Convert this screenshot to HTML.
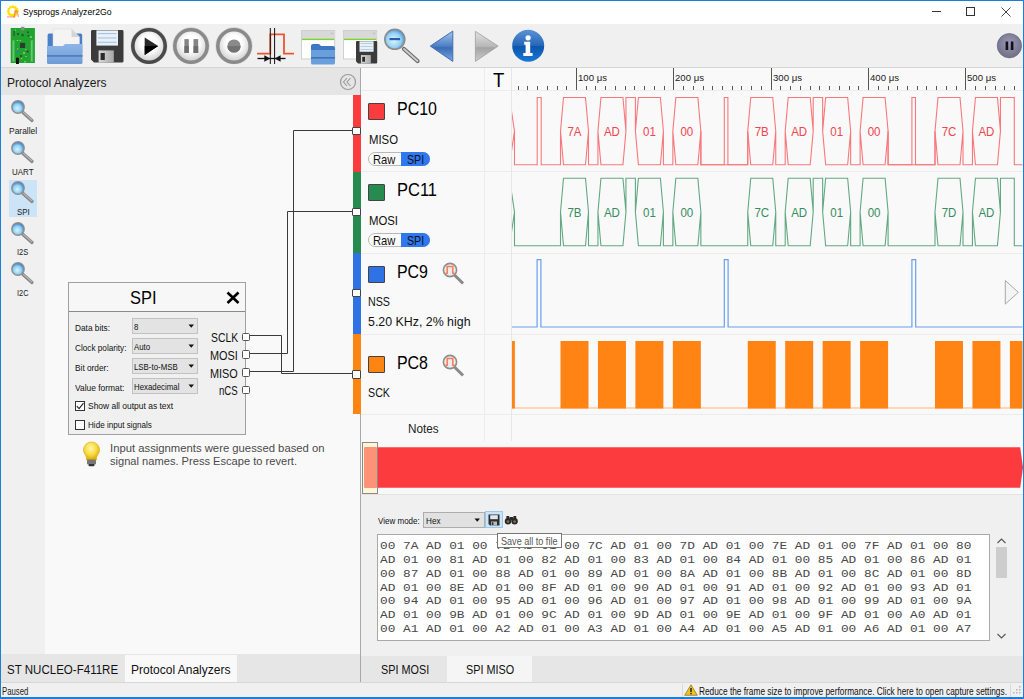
<!DOCTYPE html>
<html><head><meta charset="utf-8">
<style>
*{margin:0;padding:0;box-sizing:border-box}
html,body{width:1024px;height:699px;overflow:hidden;background:#f0f0f0;font-family:"Liberation Sans",sans-serif;color:#000}
.a{position:absolute}
.t{position:absolute;white-space:nowrap;line-height:1}
svg{overflow:visible}
</style></head><body>
<div class="a" style="left:0px;top:0px;width:1024px;height:24px;background:#fff;"></div>
<svg class="a" style="left:0px;top:0px" width="24" height="24" viewBox="0 0 24 24">
<polygon points="19.20,11.40 18.02,12.77 18.36,14.55 16.65,15.15 16.05,16.86 14.27,16.52 12.90,17.70 11.53,16.52 9.75,16.86 9.15,15.15 7.44,14.55 7.78,12.77 6.60,11.40 7.78,10.03 7.44,8.25 9.15,7.65 9.75,5.94 11.53,6.28 12.90,5.10 14.27,6.28 16.05,5.94 16.65,7.65 18.36,8.25 18.02,10.03" fill="#ffe200"/>
<circle cx="12.4" cy="11.1" r="3" fill="#fff"/>
<path d="M7 16.9H14.2L15.3 10.9H16.6L18.6 16.9" fill="none" stroke="#f9a0b4" stroke-width="1.3"/>
<path d="M13.2 16.9L14.2 16.9L15.3 10.9H16.6L17.3 13" fill="none" stroke="#f39a2a" stroke-width="1.3"/>
</svg>
<div class="t" style="left:23.00px;top:8.01px;font-size:9.29px;font-family:'Liberation Sans',sans-serif;font-weight:normal;color:#000;transform:scaleX(0.9391);transform-origin:0 0;">Sysprogs Analyzer2Go</div>
<div class="a" style="left:932px;top:11px;width:9px;height:1px;background:#333;"></div>
<div class="a" style="left:966px;top:7px;width:9px;height:9px;border:1px solid #333"></div>
<svg class="a" style="left:1001px;top:7px" width="10" height="10"><path d="M0.5 0.5l9 9M9.5 0.5l-9 9" stroke="#333" stroke-width="0.9"/></svg>
<div class="a" style="left:1px;top:24px;width:1022px;height:43px;background:#f0f0f0;"></div>
<div class="a" style="left:1px;top:67px;width:1022px;height:1px;background:#d5d5d5;"></div>
<div class="a" style="left:1px;top:68px;width:359px;height:27px;background:#e5e5e5;"></div>
<div class="t" style="left:7.00px;top:75.99px;font-size:13.43px;font-family:'Liberation Sans',sans-serif;font-weight:normal;color:#1a1a1a;transform:scaleX(0.8956);transform-origin:0 0;">Protocol Analyzers</div>
<svg class="a" style="left:339px;top:73px" width="18" height="18"><circle cx="9" cy="9" r="7.5" fill="none" stroke="#9a9a9a" stroke-width="1.2"/>
<path d="M8 5l-3.5 4 3.5 4M11.5 5l-3.5 4 3.5 4" fill="none" stroke="#9a9a9a" stroke-width="1.1"/></svg>
<div class="a" style="left:1px;top:95px;width:44px;height:559px;background:#f0f0f0;"></div>
<div class="a" style="left:45px;top:95px;width:315px;height:559px;background:#f9f9f9;"></div>
<div class="a" style="left:9px;top:180px;width:28px;height:37px;background:#cce4f7;"></div>
<svg class="a" style="left:8.3px;top:97.4px" width="28" height="26" viewBox="0 0 28 26">
<defs><radialGradient id="lg" cx="0.45" cy="0.6" r="0.6"><stop offset="0" stop-color="#d8f4fc"/><stop offset="0.55" stop-color="#8fd0f2"/><stop offset="0.85" stop-color="#4a90d8"/><stop offset="1" stop-color="#2a5fb0"/></radialGradient></defs>
<path d="M15 15.5L24 23.5" stroke="#858585" stroke-width="3.2" stroke-linecap="round"/>
<path d="M15.5 15.5L24 23" stroke="#b5b5b5" stroke-width="1.1" stroke-linecap="round"/>
<circle cx="10" cy="10" r="6.2" fill="url(#lg)" stroke="#8f8f8f" stroke-width="1.4"/>
</svg>
<div class="t" style="left:8.90px;top:126.95px;font-size:9.00px;font-family:'Liberation Sans',sans-serif;font-weight:normal;color:#1a1a1a;transform:scaleX(0.9395);transform-origin:0 0;">Parallel</div>
<svg class="a" style="left:8.3px;top:137.9px" width="28" height="26" viewBox="0 0 28 26">
<defs><radialGradient id="lg" cx="0.45" cy="0.6" r="0.6"><stop offset="0" stop-color="#d8f4fc"/><stop offset="0.55" stop-color="#8fd0f2"/><stop offset="0.85" stop-color="#4a90d8"/><stop offset="1" stop-color="#2a5fb0"/></radialGradient></defs>
<path d="M15 15.5L24 23.5" stroke="#858585" stroke-width="3.2" stroke-linecap="round"/>
<path d="M15.5 15.5L24 23" stroke="#b5b5b5" stroke-width="1.1" stroke-linecap="round"/>
<circle cx="10" cy="10" r="6.2" fill="url(#lg)" stroke="#8f8f8f" stroke-width="1.4"/>
</svg>
<div class="t" style="left:12.25px;top:167.65px;font-size:9.00px;font-family:'Liberation Sans',sans-serif;font-weight:normal;color:#1a1a1a;transform:scaleX(0.8834);transform-origin:0 0;">UART</div>
<svg class="a" style="left:8.3px;top:178.4px" width="28" height="26" viewBox="0 0 28 26">
<defs><radialGradient id="lg" cx="0.45" cy="0.6" r="0.6"><stop offset="0" stop-color="#d8f4fc"/><stop offset="0.55" stop-color="#8fd0f2"/><stop offset="0.85" stop-color="#4a90d8"/><stop offset="1" stop-color="#2a5fb0"/></radialGradient></defs>
<path d="M15 15.5L24 23.5" stroke="#858585" stroke-width="3.2" stroke-linecap="round"/>
<path d="M15.5 15.5L24 23" stroke="#b5b5b5" stroke-width="1.1" stroke-linecap="round"/>
<circle cx="10" cy="10" r="6.2" fill="url(#lg)" stroke="#8f8f8f" stroke-width="1.4"/>
</svg>
<div class="t" style="left:16.65px;top:208.05px;font-size:9.00px;font-family:'Liberation Sans',sans-serif;font-weight:normal;color:#1a1a1a;transform:scaleX(0.8754);transform-origin:0 0;">SPI</div>
<svg class="a" style="left:8.3px;top:218.9px" width="28" height="26" viewBox="0 0 28 26">
<defs><radialGradient id="lg" cx="0.45" cy="0.6" r="0.6"><stop offset="0" stop-color="#d8f4fc"/><stop offset="0.55" stop-color="#8fd0f2"/><stop offset="0.85" stop-color="#4a90d8"/><stop offset="1" stop-color="#2a5fb0"/></radialGradient></defs>
<path d="M15 15.5L24 23.5" stroke="#858585" stroke-width="3.2" stroke-linecap="round"/>
<path d="M15.5 15.5L24 23" stroke="#b5b5b5" stroke-width="1.1" stroke-linecap="round"/>
<circle cx="10" cy="10" r="6.2" fill="url(#lg)" stroke="#8f8f8f" stroke-width="1.4"/>
</svg>
<div class="t" style="left:17.35px;top:248.45px;font-size:9.00px;font-family:'Liberation Sans',sans-serif;font-weight:normal;color:#1a1a1a;transform:scaleX(0.8365);transform-origin:0 0;">I2S</div>
<svg class="a" style="left:8.3px;top:259.4px" width="28" height="26" viewBox="0 0 28 26">
<defs><radialGradient id="lg" cx="0.45" cy="0.6" r="0.6"><stop offset="0" stop-color="#d8f4fc"/><stop offset="0.55" stop-color="#8fd0f2"/><stop offset="0.85" stop-color="#4a90d8"/><stop offset="1" stop-color="#2a5fb0"/></radialGradient></defs>
<path d="M15 15.5L24 23.5" stroke="#858585" stroke-width="3.2" stroke-linecap="round"/>
<path d="M15.5 15.5L24 23" stroke="#b5b5b5" stroke-width="1.1" stroke-linecap="round"/>
<circle cx="10" cy="10" r="6.2" fill="url(#lg)" stroke="#8f8f8f" stroke-width="1.4"/>
</svg>
<div class="t" style="left:17.25px;top:288.95px;font-size:9.00px;font-family:'Liberation Sans',sans-serif;font-weight:normal;color:#1a1a1a;transform:scaleX(0.8211);transform-origin:0 0;">I2C</div>
<div class="a" style="left:360px;top:68px;width:1px;height:614px;background:#a8a8a8;"></div>
<div class="a" style="left:1px;top:654px;width:359px;height:28px;background:#e6e6e6;"></div>
<div class="a" style="left:361px;top:656px;width:662px;height:26px;background:#e6e6e6;"></div>
<div class="a" style="left:125px;top:655px;width:112px;height:27px;background:#f9f9f9;"></div>
<div class="t" style="left:7.20px;top:663.03px;font-size:13.14px;font-family:'Liberation Sans',sans-serif;font-weight:normal;color:#111;transform:scaleX(0.8791);transform-origin:0 0;">ST NUCLEO-F411RE</div>
<div class="t" style="left:130.70px;top:663.03px;font-size:13.14px;font-family:'Liberation Sans',sans-serif;font-weight:normal;color:#111;transform:scaleX(0.9150);transform-origin:0 0;">Protocol Analyzers</div>
<div class="a" style="left:447px;top:656px;width:85px;height:26px;background:#f5f5f5;"></div>
<div class="t" style="left:380.60px;top:664.01px;font-size:12.57px;font-family:'Liberation Sans',sans-serif;font-weight:normal;color:#111;transform:scaleX(0.8625);transform-origin:0 0;">SPI MOSI</div>
<div class="t" style="left:466.30px;top:664.01px;font-size:12.57px;font-family:'Liberation Sans',sans-serif;font-weight:normal;color:#111;transform:scaleX(0.8625);transform-origin:0 0;">SPI MISO</div>
<div class="a" style="left:1px;top:682px;width:1022px;height:1px;background:#d7d7d7;"></div>
<div class="a" style="left:1px;top:683px;width:1022px;height:14px;background:#f0f0f0;"></div>
<div class="t" style="left:2.00px;top:686.27px;font-size:10.86px;font-family:'Liberation Sans',sans-serif;font-weight:normal;color:#222;transform:scaleX(0.7169);transform-origin:0 0;">Paused</div>
<div class="a" style="left:682px;top:684px;width:1px;height:13px;background:#dadada;"></div>
<div class="a" style="left:1010px;top:684px;width:1px;height:13px;background:#dadada;"></div>
<svg class="a" style="left:684px;top:684px" width="14" height="12"><path d="M7 0.8L13.3 11.3H0.7Z" fill="#f3c21f" stroke="#8a7a2a" stroke-width="0.8"/><path d="M7 4v4" stroke="#222" stroke-width="1.5"/><circle cx="7" cy="9.6" r="0.8" fill="#222"/></svg>
<div class="t" style="left:699.10px;top:685.91px;font-size:10.57px;font-family:'Liberation Sans',sans-serif;font-weight:normal;color:#111;transform:scaleX(0.7864);transform-origin:0 0;">Reduce the frame size to improve performance. Click here to open capture settings.</div>
<svg class="a" style="left:1013px;top:686px" width="9" height="9"><g fill="#b5b5b5"><rect x="6" y="0" width="1.5" height="1.5"/><rect x="3" y="3" width="1.5" height="1.5"/><rect x="6" y="3" width="1.5" height="1.5"/><rect x="0" y="6" width="1.5" height="1.5"/><rect x="3" y="6" width="1.5" height="1.5"/><rect x="6" y="6" width="1.5" height="1.5"/></g></svg>
<svg class="a" style="left:0;top:0" width="40" height="70" viewBox="0 0 40 70">
<rect x="10.7" y="28" width="24.2" height="35" fill="#1ea42f"/>
<g fill="#45b855"><rect x="12.2" y="40" width="2.6" height="22"/><rect x="30.6" y="40" width="2.6" height="22"/></g>
<g fill="#8fd08a" opacity="0.7"><rect x="12.8" y="41" width="1" height="20"/><rect x="31.2" y="41" width="1" height="20"/></g>
<rect x="21.1" y="26.8" width="3.2" height="3.6" fill="#8a8a8a"/>
<rect x="20" y="42.9" width="5.1" height="5.1" fill="#2f3a32"/>
<g fill="#3a4a3c"><rect x="17" y="33" width="2" height="2"/><rect x="21.5" y="34" width="2.2" height="2.2"/><rect x="27" y="31.5" width="2" height="1.5"/><rect x="27.5" y="35" width="1.5" height="1.5"/><rect x="26.6" y="50.5" width="2" height="2"/><rect x="20" y="55" width="2" height="2"/><rect x="13.5" y="31" width="1.2" height="5"/></g>
<g fill="#d8c870"><rect x="16.8" y="40" width="1.3" height="0.9"/><rect x="19.5" y="40" width="1.3" height="0.9"/><rect x="17" y="48.5" width="1.2" height="0.9"/><rect x="25.2" y="49" width="1.2" height="0.9"/><rect x="21" y="58" width="1.2" height="0.9"/><rect x="25.5" y="56" width="1.2" height="0.9"/></g>
<g fill="#a8d8a0" opacity="0.6"><rect x="15" y="29.5" width="1" height="1.5"/><rect x="30" y="36" width="2" height="2"/><rect x="23" y="52" width="2" height="2"/><rect x="24" y="61" width="2" height="1.5"/></g>
<rect x="17.4" y="50" width="1.8" height="2.3" fill="#3a70d8"/>
<rect x="16" y="57.7" width="2.9" height="6.3" fill="#111"/>
</svg>
<svg class="a" style="left:46px;top:28px" width="38" height="37" viewBox="0 0 38 37">
<defs><linearGradient id="fb" x1="0" y1="0" x2="0" y2="1"><stop offset="0" stop-color="#8fb6e6"/><stop offset="1" stop-color="#6e9bd6"/></linearGradient></defs>
<rect x="1.6" y="5.5" width="34.6" height="20" rx="1.5" fill="#4a7fc8"/>
<path d="M7 1h18.5l8 8v17H7z" fill="#f4f4f4" stroke="#d8d8d8" stroke-width="0.5"/>
<path d="M25.5 1v8h8z" fill="#d5d5d5"/>
<path d="M1 18h16l2-2h17.5v18.5a1.5 1.5 0 0 1-1.5 1.5H2.5A1.5 1.5 0 0 1 1 34.5z" fill="url(#fb)"/>
<rect x="1" y="27" width="35.5" height="1.8" fill="#4f7fc0"/>
</svg>
<svg class="a" style="left:90.8px;top:29.8px" width="32.5" height="32.6" viewBox="0 0 32.5 32.6" preserveAspectRatio="none">
<path d="M0 1.5A1.5 1.5 0 0 1 1.5 0H31a1.5 1.5 0 0 1 1.5 1.5V31a1.5 1.5 0 0 1-1.5 1.5H3L0 29.5z" fill="#3b3b3b"/>
<rect x="5.4" y="0.4" width="21.6" height="15.2" fill="#e8f0f8"/>
<g fill="#9bb8d8"><rect x="7" y="3.2" width="18.5" height="0.9"/><rect x="7" y="7.5" width="18.5" height="0.9"/><rect x="7" y="11.8" width="18.5" height="0.9"/></g>
<defs><linearGradient id="sh90" x1="0" y1="0" x2="1" y2="0"><stop offset="0" stop-color="#d8d8d8"/><stop offset="1" stop-color="#a9a9a9"/></linearGradient></defs>
<rect x="7.6" y="20.4" width="15.2" height="12.2" fill="url(#sh90)"/>
<rect x="9.6" y="23" width="4.2" height="7" fill="#2a2a2a"/>
</svg>
<svg class="a" style="left:130.3px;top:26.9px" width="38" height="38" viewBox="0 0 38 38">
<defs><radialGradient id="cgplay" cx="0.5" cy="0.42" r="0.55"><stop offset="0.45" stop-color="#ffffff"/><stop offset="1" stop-color="#cfcfcf"/></radialGradient>
<linearGradient id="crplay" x1="0" y1="0" x2="0" y2="1"><stop offset="0" stop-color="#c8c8c8"/><stop offset="1" stop-color="#e6e6e6"/></linearGradient></defs>
<circle cx="19" cy="19" r="18.3" fill="none" stroke="url(#crplay)" stroke-width="0.8"/>
<circle cx="19" cy="19" r="16.2" fill="url(#cgplay)" stroke="#4a4a4a" stroke-width="3.6"/><path d="M14.7 10.4L28.2 19 14.7 27.9z" fill="#2a2a2a"/><path d="M14.7 19h13.5l-13.5 8.9z" fill="#000"/></svg>
<svg class="a" style="left:172.3px;top:26.9px" width="38" height="38" viewBox="0 0 38 38">
<defs><radialGradient id="cgpause" cx="0.5" cy="0.42" r="0.55"><stop offset="0.45" stop-color="#ffffff"/><stop offset="1" stop-color="#cfcfcf"/></radialGradient>
<linearGradient id="crpause" x1="0" y1="0" x2="0" y2="1"><stop offset="0" stop-color="#c8c8c8"/><stop offset="1" stop-color="#e6e6e6"/></linearGradient></defs>
<circle cx="19" cy="19" r="18.3" fill="none" stroke="url(#crpause)" stroke-width="0.8"/>
<circle cx="19" cy="19" r="16.2" fill="url(#cgpause)" stroke="#8a8a8a" stroke-width="3.6"/><rect x="12.4" y="12.1" width="4.4" height="13.9" fill="#858585"/><rect x="21.5" y="12.1" width="4.7" height="13.9" fill="#858585"/><rect x="12.4" y="19" width="4.4" height="7" fill="#6e6e6e"/><rect x="21.5" y="19" width="4.7" height="7" fill="#6e6e6e"/></svg>
<svg class="a" style="left:214.5px;top:26.9px" width="38" height="38" viewBox="0 0 38 38">
<defs><radialGradient id="cgrec" cx="0.5" cy="0.42" r="0.55"><stop offset="0.45" stop-color="#ffffff"/><stop offset="1" stop-color="#cfcfcf"/></radialGradient>
<linearGradient id="crrec" x1="0" y1="0" x2="0" y2="1"><stop offset="0" stop-color="#c8c8c8"/><stop offset="1" stop-color="#e6e6e6"/></linearGradient></defs>
<circle cx="19" cy="19" r="18.3" fill="none" stroke="url(#crrec)" stroke-width="0.8"/>
<circle cx="19" cy="19" r="16.2" fill="url(#cgrec)" stroke="#8a8a8a" stroke-width="3.6"/><circle cx="19" cy="19" r="6.6" fill="#8a8a8a"/><path d="M12.4 19a6.6 6.6 0 0 0 13.2 0z" fill="#727272"/></svg>
<svg class="a" style="left:256px;top:27px" width="40" height="38" viewBox="0 0 40 38">
<path d="M1 26.6h13.3V7.3h13.7v19.3h10" fill="none" stroke="#e8572e" stroke-width="1.8"/>
<path d="M14.3 1v36M18.6 1v36" stroke="#111" stroke-width="1"/>
<path d="M1.5 31.5h28" stroke="#111" stroke-width="1.3"/>
<path d="M14.3 31.5l-6-3.3v6.6z M18.6 31.5l6-3.3v6.6z" fill="#111"/>
</svg>
<svg class="a" style="left:300.6px;top:29.5px" width="36" height="35" viewBox="0 0 36 35">
<rect x="0.5" y="0.5" width="33.2" height="28.5" fill="#fff" stroke="#cfcfcf" stroke-width="1"/>
<rect x="1" y="1" width="32.2" height="7.5" fill="#d9d9d9"/>
<rect x="1" y="8.5" width="32.2" height="1.6" fill="#7fd03a"/>
<path d="M30 2.5l2 2M32 2.5l-2 2" stroke="#aaa" stroke-width="0.6"/></svg>
<svg class="a" style="left:342.7px;top:29.5px" width="36" height="35" viewBox="0 0 36 35">
<rect x="0.5" y="0.5" width="33.2" height="28.5" fill="#fff" stroke="#cfcfcf" stroke-width="1"/>
<rect x="1" y="1" width="32.2" height="7.5" fill="#d9d9d9"/>
<rect x="1" y="8.5" width="32.2" height="1.6" fill="#7fd03a"/>
<path d="M30 2.5l2 2M32 2.5l-2 2" stroke="#aaa" stroke-width="0.6"/></svg>
<svg class="a" style="left:310px;top:42.5px" width="26" height="22" viewBox="0 0 26 22">
<path d="M1 3a2 2 0 0 1 2-2h6l2 2h12a2 2 0 0 1 2 2v3H1z" fill="#3d78c4"/>
<path d="M1 7h24v13a1.5 1.5 0 0 1-1.5 1.5h-21A1.5 1.5 0 0 1 1 20z" fill="#6b9fdc"/>
<rect x="1" y="14" width="24" height="1.6" fill="#3f72b8"/>
</svg>
<svg class="a" style="left:356.3px;top:41.0px" width="21.2" height="22.5" viewBox="0 0 32.5 32.6" preserveAspectRatio="none">
<path d="M0 1.5A1.5 1.5 0 0 1 1.5 0H31a1.5 1.5 0 0 1 1.5 1.5V31a1.5 1.5 0 0 1-1.5 1.5H3L0 29.5z" fill="#3b3b3b"/>
<rect x="5.4" y="0.4" width="21.6" height="15.2" fill="#e8f0f8"/>
<g fill="#9bb8d8"><rect x="7" y="3.2" width="18.5" height="0.9"/><rect x="7" y="7.5" width="18.5" height="0.9"/><rect x="7" y="11.8" width="18.5" height="0.9"/></g>
<defs><linearGradient id="sh356" x1="0" y1="0" x2="1" y2="0"><stop offset="0" stop-color="#d8d8d8"/><stop offset="1" stop-color="#a9a9a9"/></linearGradient></defs>
<rect x="7.6" y="20.4" width="15.2" height="12.2" fill="url(#sh356)"/>
<rect x="9.6" y="23" width="4.2" height="7" fill="#2a2a2a"/>
</svg>
<svg class="a" style="left:383px;top:27px" width="38" height="37" viewBox="0 0 38 37">
<defs><radialGradient id="zg" cx="0.45" cy="0.55" r="0.6"><stop offset="0" stop-color="#dff6fd"/><stop offset="0.6" stop-color="#95d2f3"/><stop offset="1" stop-color="#3a86d2"/></radialGradient></defs>
<path d="M21 22L34.5 34" stroke="#6a6a6a" stroke-width="4.2" stroke-linecap="round"/>
<path d="M21 22L34.5 34" stroke="#cfcfcf" stroke-width="1.8" stroke-linecap="round"/>
<circle cx="11.8" cy="12.3" r="10" fill="url(#zg)" stroke="#8c8c8c" stroke-width="1.6"/>
<rect x="6.5" y="11" width="10.6" height="2.2" fill="#2a5fa8"/>
</svg>
<svg class="a" style="left:429px;top:29.5px" width="26" height="33" viewBox="0 0 26 33">
<defs><linearGradient id="lt" x1="0" y1="0" x2="0" y2="1"><stop offset="0" stop-color="#a6c6ea"/><stop offset="0.5" stop-color="#4e7ec4"/><stop offset="0.55" stop-color="#3a6cb6"/><stop offset="1" stop-color="#7ea6e2"/></linearGradient></defs>
<path d="M1.3 16.1L23.8 1.1V31.4z" fill="url(#lt)" stroke="#3f6fb4" stroke-width="1"/>
</svg>
<svg class="a" style="left:474px;top:29.5px" width="26" height="33" viewBox="0 0 26 33">
<defs><linearGradient id="rt" x1="0" y1="0" x2="0" y2="1"><stop offset="0" stop-color="#e2e2e2"/><stop offset="0.5" stop-color="#b8b8b8"/><stop offset="0.55" stop-color="#a3a3a3"/><stop offset="1" stop-color="#cdcdcd"/></linearGradient></defs>
<path d="M1.4 1.3V31.4L24.2 16.1z" fill="url(#rt)" stroke="#a0a0a0" stroke-width="0.8"/>
</svg>
<svg class="a" style="left:511px;top:29px" width="34" height="34" viewBox="0 0 34 34">
<defs><linearGradient id="ig" x1="0" y1="0" x2="0" y2="1"><stop offset="0" stop-color="#5b93d6"/><stop offset="0.5" stop-color="#2466b8"/><stop offset="0.52" stop-color="#0c56ad"/><stop offset="1" stop-color="#1a78d6"/></linearGradient></defs>
<circle cx="17.2" cy="16.8" r="16" fill="url(#ig)"/>
<circle cx="17.1" cy="8.8" r="2.6" fill="#fff"/>
<path d="M13.2 12.8h6v11.2h2.4v3.1H12.3V24h2.3v-8.2h-1.4z" fill="#fff"/>
</svg>
<svg class="a" style="left:996px;top:33px" width="26" height="26" viewBox="0 0 26 26">
<defs><radialGradient id="pr" cx="0.5" cy="0.4" r="0.6"><stop offset="0" stop-color="#9a9ab8"/><stop offset="1" stop-color="#6f6f88"/></radialGradient></defs>
<circle cx="13.4" cy="12.7" r="12.2" fill="url(#pr)" stroke="#5f5f70" stroke-width="0.6"/>
<rect x="9.6" y="8.5" width="2.6" height="8.5" fill="#111"/><rect x="14.8" y="8.5" width="2.6" height="8.5" fill="#111"/>
</svg>
<div class="a" style="left:68px;top:282px;width:178px;height:153px;background:#f0f0f0;border:1px solid #a0a0a0"></div>
<div class="a" style="left:69px;top:283px;width:176px;height:28px;background:#f7f7f7;"></div>
<div class="a" style="left:69px;top:311px;width:176px;height:1px;background:#8a8a8a;"></div>
<div class="t" style="left:130.05px;top:290.46px;font-size:17.57px;font-family:'Liberation Sans',sans-serif;font-weight:normal;color:#000;transform:scaleX(0.9356);transform-origin:0 0;">SPI</div>
<svg class="a" style="left:226px;top:291px" width="15" height="14"><path d="M1.5 1.5l11 10.5M12.5 1.5l-11 10.5" stroke="#000" stroke-width="2.6"/></svg>
<div class="t" style="left:74.90px;top:323.19px;font-size:9.43px;font-family:'Liberation Sans',sans-serif;font-weight:normal;color:#111;transform:scaleX(0.8813);transform-origin:0 0;">Data bits:</div>
<div class="a" style="left:131.5px;top:318px;width:66px;height:16px;background:#e3e3e3;border:1px solid #c2c2c2"></div>
<div class="t" style="left:134.10px;top:322.95px;font-size:9.00px;font-family:'Liberation Sans',sans-serif;font-weight:normal;color:#111;transform:scaleX(0.8727);transform-origin:0 0;">8</div>
<svg class="a" style="left:187.5px;top:324.0px" width="7" height="5"><path d="M0.5 0.5h5.5l-2.75 3.3z" fill="#111"/></svg>
<div class="t" style="left:74.90px;top:343.09px;font-size:9.43px;font-family:'Liberation Sans',sans-serif;font-weight:normal;color:#111;transform:scaleX(0.8698);transform-origin:0 0;">Clock polarity:</div>
<div class="a" style="left:131.5px;top:338px;width:66px;height:16px;background:#e3e3e3;border:1px solid #c2c2c2"></div>
<div class="t" style="left:134.10px;top:342.95px;font-size:9.00px;font-family:'Liberation Sans',sans-serif;font-weight:normal;color:#111;transform:scaleX(0.8727);transform-origin:0 0;">Auto</div>
<svg class="a" style="left:187.5px;top:344.0px" width="7" height="5"><path d="M0.5 0.5h5.5l-2.75 3.3z" fill="#111"/></svg>
<div class="t" style="left:74.90px;top:363.09px;font-size:9.43px;font-family:'Liberation Sans',sans-serif;font-weight:normal;color:#111;transform:scaleX(0.8809);transform-origin:0 0;">Bit order:</div>
<div class="a" style="left:131.5px;top:358px;width:66px;height:16px;background:#e3e3e3;border:1px solid #c2c2c2"></div>
<div class="t" style="left:134.10px;top:362.95px;font-size:9.00px;font-family:'Liberation Sans',sans-serif;font-weight:normal;color:#111;transform:scaleX(0.8727);transform-origin:0 0;">LSB-to-MSB</div>
<svg class="a" style="left:187.5px;top:364.0px" width="7" height="5"><path d="M0.5 0.5h5.5l-2.75 3.3z" fill="#111"/></svg>
<div class="t" style="left:74.90px;top:382.99px;font-size:9.43px;font-family:'Liberation Sans',sans-serif;font-weight:normal;color:#111;transform:scaleX(0.8921);transform-origin:0 0;">Value format:</div>
<div class="a" style="left:131.5px;top:378px;width:66px;height:16px;background:#e3e3e3;border:1px solid #c2c2c2"></div>
<div class="t" style="left:134.10px;top:382.95px;font-size:9.00px;font-family:'Liberation Sans',sans-serif;font-weight:normal;color:#111;transform:scaleX(0.8727);transform-origin:0 0;">Hexadecimal</div>
<svg class="a" style="left:187.5px;top:384.0px" width="7" height="5"><path d="M0.5 0.5h5.5l-2.75 3.3z" fill="#111"/></svg>
<div class="a" style="left:75px;top:401px;width:10px;height:10px;background:#fff;border:1px solid #333"></div>
<svg class="a" style="left:75px;top:401px" width="10" height="10"><path d="M1.8 5.2l2.3 2.4 4.4-5.4" fill="none" stroke="#222" stroke-width="1.1"/></svg>
<div class="t" style="left:88.20px;top:400.54px;font-size:9.71px;font-family:'Liberation Sans',sans-serif;font-weight:normal;color:#111;transform:scaleX(0.8717);transform-origin:0 0;">Show all output as text</div>
<div class="a" style="left:75px;top:420px;width:10px;height:10px;background:#fff;border:1px solid #333"></div>
<div class="t" style="left:88.20px;top:420.44px;font-size:9.71px;font-family:'Liberation Sans',sans-serif;font-weight:normal;color:#111;transform:scaleX(0.8333);transform-origin:0 0;">Hide input signals</div>
<div class="t" style="left:210.70px;top:332.29px;font-size:12.71px;font-family:'Liberation Sans',sans-serif;font-weight:normal;color:#111;transform:scaleX(0.8159);transform-origin:0 0;">SCLK</div>
<div class="a" style="left:241.5px;top:332.59999999999997px;width:8.6px;height:8.6px;background:#fff;border:1px solid #555;border-radius:1.5px"></div>
<div class="t" style="left:210.00px;top:349.89px;font-size:12.71px;font-family:'Liberation Sans',sans-serif;font-weight:normal;color:#111;transform:scaleX(0.8555);transform-origin:0 0;">MOSI</div>
<div class="a" style="left:241.5px;top:350.2px;width:8.6px;height:8.6px;background:#fff;border:1px solid #555;border-radius:1.5px"></div>
<div class="t" style="left:210.00px;top:367.69px;font-size:12.71px;font-family:'Liberation Sans',sans-serif;font-weight:normal;color:#111;transform:scaleX(0.8555);transform-origin:0 0;">MISO</div>
<div class="a" style="left:241.5px;top:368.0px;width:8.6px;height:8.6px;background:#fff;border:1px solid #555;border-radius:1.5px"></div>
<div class="t" style="left:219.00px;top:385.19px;font-size:12.71px;font-family:'Liberation Sans',sans-serif;font-weight:normal;color:#111;transform:scaleX(0.7601);transform-origin:0 0;">nCS</div>
<div class="a" style="left:241.5px;top:385.5px;width:8.6px;height:8.6px;background:#fff;border:1px solid #555;border-radius:1.5px"></div>
<svg class="a" style="left:82px;top:441px" width="19" height="26" viewBox="0 0 19 26">
<defs><radialGradient id="bl" cx="0.45" cy="0.35" r="0.6"><stop offset="0" stop-color="#fff6b0"/><stop offset="0.6" stop-color="#f8dc40"/><stop offset="1" stop-color="#e0b010"/></radialGradient></defs>
<path d="M9.5 1A8 8 0 0 1 17.5 9c0 3.2-2.4 5-3 7.5v2.5h-10v-2.5C3.9 14 1.5 12.2 1.5 9A8 8 0 0 1 9.5 1z" fill="url(#bl)" stroke="#d6a814" stroke-width="0.6"/>
<rect x="5" y="18.5" width="9" height="5" rx="1" fill="#777"/><rect x="6.5" y="23" width="6" height="2.3" rx="1" fill="#333"/>
</svg>
<div class="t" style="left:109.80px;top:443.37px;font-size:10.86px;font-family:'Liberation Sans',sans-serif;font-weight:normal;color:#4a4a4a;transform:scaleX(1.0391);transform-origin:0 0;">Input assignments were guessed based on</div>
<div class="t" style="left:109.80px;top:456.37px;font-size:10.86px;font-family:'Liberation Sans',sans-serif;font-weight:normal;color:#4a4a4a;transform:scaleX(1.0227);transform-origin:0 0;">signal names. Press Escape to revert.</div>
<div class="a" style="left:361px;top:68px;width:662px;height:373px;background:#f9f9f9;"></div>
<div class="a" style="left:361px;top:90px;width:662px;height:1px;background:#ececec;"></div>
<div class="a" style="left:361px;top:171px;width:662px;height:1px;background:#ececec;"></div>
<div class="a" style="left:361px;top:253px;width:662px;height:1px;background:#ececec;"></div>
<div class="a" style="left:361px;top:334px;width:662px;height:1px;background:#ececec;"></div>
<div class="a" style="left:361px;top:414px;width:662px;height:1px;background:#ececec;"></div>
<div class="a" style="left:361px;top:441px;width:662px;height:1px;background:#ececec;"></div>
<div class="a" style="left:484px;top:68px;width:1px;height:373px;background:#ececec;"></div>
<div class="a" style="left:511px;top:68px;width:1px;height:373px;background:#e6e6e6;"></div>
<div class="a" style="left:353px;top:95px;width:8px;height:77px;background:#fc3b3d;"></div>
<div class="a" style="left:353px;top:172px;width:8px;height:81px;background:#278a4f;"></div>
<div class="a" style="left:353px;top:253px;width:8px;height:81px;background:#2f72e6;"></div>
<div class="a" style="left:353px;top:334px;width:8px;height:80px;background:#ff8512;"></div>
<div class="a" style="left:368px;top:103px;width:17px;height:17px;background:#fc3b3d;border:1px solid #444;border-radius:1px"></div>
<div class="t" style="left:397.00px;top:100.11px;font-size:18.57px;font-family:'Liberation Sans',sans-serif;font-weight:normal;color:#000;transform:scaleX(0.8610);transform-origin:0 0;">PC10</div>
<div class="a" style="left:368px;top:184px;width:17px;height:17px;background:#278a4f;border:1px solid #444;border-radius:1px"></div>
<div class="t" style="left:397.00px;top:181.11px;font-size:18.57px;font-family:'Liberation Sans',sans-serif;font-weight:normal;color:#000;transform:scaleX(0.8873);transform-origin:0 0;">PC11</div>
<div class="a" style="left:368px;top:265.5px;width:17px;height:17px;background:#2f72e6;border:1px solid #444;border-radius:1px"></div>
<div class="t" style="left:397.00px;top:263.11px;font-size:18.57px;font-family:'Liberation Sans',sans-serif;font-weight:normal;color:#000;transform:scaleX(0.8580);transform-origin:0 0;">PC9</div>
<div class="a" style="left:368px;top:356px;width:17px;height:17px;background:#ff8512;border:1px solid #444;border-radius:1px"></div>
<div class="t" style="left:397.00px;top:354.11px;font-size:18.57px;font-family:'Liberation Sans',sans-serif;font-weight:normal;color:#000;transform:scaleX(0.8580);transform-origin:0 0;">PC8</div>
<div class="t" style="left:368.50px;top:133.97px;font-size:12.86px;font-family:'Liberation Sans',sans-serif;font-weight:normal;color:#111;transform:scaleX(0.8826);transform-origin:0 0;">MISO</div>
<div class="a" style="left:368px;top:151.5px;width:62px;height:14px;background:#fbfbfb;border:1px solid #b8b8b8;border-radius:7px"></div>
<div class="a" style="left:401px;top:151.5px;width:29px;height:14px;background:#3078f0;border-radius:0 7px 7px 0"></div>
<div class="t" style="left:372.80px;top:154.26px;font-size:12.29px;font-family:'Liberation Sans',sans-serif;font-weight:normal;color:#111;transform:scaleX(0.9114);transform-origin:0 0;">Raw</div>
<div class="t" style="left:406.50px;top:154.26px;font-size:12.29px;font-family:'Liberation Sans',sans-serif;font-weight:normal;color:#111;transform:scaleX(0.8686);transform-origin:0 0;">SPI</div>
<div class="t" style="left:368.50px;top:215.27px;font-size:12.86px;font-family:'Liberation Sans',sans-serif;font-weight:normal;color:#111;transform:scaleX(0.8826);transform-origin:0 0;">MOSI</div>
<div class="a" style="left:368px;top:232.5px;width:62px;height:14px;background:#fbfbfb;border:1px solid #b8b8b8;border-radius:7px"></div>
<div class="a" style="left:401px;top:232.5px;width:29px;height:14px;background:#3078f0;border-radius:0 7px 7px 0"></div>
<div class="t" style="left:372.80px;top:235.26px;font-size:12.29px;font-family:'Liberation Sans',sans-serif;font-weight:normal;color:#111;transform:scaleX(0.9114);transform-origin:0 0;">Raw</div>
<div class="t" style="left:406.50px;top:235.26px;font-size:12.29px;font-family:'Liberation Sans',sans-serif;font-weight:normal;color:#111;transform:scaleX(0.8686);transform-origin:0 0;">SPI</div>
<div class="t" style="left:368.00px;top:296.37px;font-size:12.86px;font-family:'Liberation Sans',sans-serif;font-weight:normal;color:#111;transform:scaleX(0.8322);transform-origin:0 0;">NSS</div>
<div class="t" style="left:368.00px;top:315.97px;font-size:12.86px;font-family:'Liberation Sans',sans-serif;font-weight:normal;color:#111;transform:scaleX(0.9625);transform-origin:0 0;">5.20 KHz, 2% high</div>
<div class="t" style="left:368.00px;top:387.47px;font-size:12.86px;font-family:'Liberation Sans',sans-serif;font-weight:normal;color:#111;transform:scaleX(0.8322);transform-origin:0 0;">SCK</div>
<svg class="a" style="left:441.4px;top:261.4px" width="24" height="24" viewBox="0 0 24 24">
<path d="M14 14.5l7 7" stroke="#8a8a8a" stroke-width="3" stroke-linecap="square"/>
<circle cx="9" cy="9" r="6.6" fill="#ececec" stroke="#8e8e8e" stroke-width="1.6"/>
<path d="M4.5 12.2h1.7V5.6h5.6v6.6h1.7" fill="none" stroke="#ff7a50" stroke-width="1.5"/>
</svg>
<svg class="a" style="left:441.4px;top:352.5px" width="24" height="24" viewBox="0 0 24 24">
<path d="M14 14.5l7 7" stroke="#8a8a8a" stroke-width="3" stroke-linecap="square"/>
<circle cx="9" cy="9" r="6.6" fill="#ececec" stroke="#8e8e8e" stroke-width="1.6"/>
<path d="M4.5 12.2h1.7V5.6h5.6v6.6h1.7" fill="none" stroke="#ff7a50" stroke-width="1.5"/>
</svg>
<div class="t" style="left:407.65px;top:422.36px;font-size:13.57px;font-family:'Liberation Sans',sans-serif;font-weight:normal;color:#222;transform:scaleX(0.8659);transform-origin:0 0;">Notes</div>
<div class="t" style="left:492.65px;top:70.72px;font-size:19.86px;font-family:'Liberation Sans',sans-serif;font-weight:normal;color:#000;transform:scaleX(0.9316);transform-origin:0 0;">T</div>
<div class="a" style="left:361px;top:441px;width:662px;height:53px;background:#f8f8f8;"></div>
<div class="a" style="left:361px;top:494px;width:662px;height:1px;background:#e2e2e2;"></div>
<svg class="a" style="left:0;top:0" width="1024" height="699"><path d="M377.5 447.3H1020.2L1023 467.6L1020.2 487.8H377.5Z" fill="#fc3b3f"/></svg>
<div class="a" style="left:362px;top:442px;width:16px;height:52px;background:#fff5d8;border:1px solid #8a8a8a"></div>
<div class="a" style="left:363.5px;top:447px;width:13px;height:41px;background:#fd9277;border-radius:1px"></div>
<div class="a" style="left:361px;top:495px;width:662px;height:161px;background:#f0f0f0;"></div>
<div class="t" style="left:378.40px;top:517.01px;font-size:9.29px;font-family:'Liberation Sans',sans-serif;font-weight:normal;color:#111;transform:scaleX(0.8646);transform-origin:0 0;">View mode:</div>
<div class="a" style="left:423px;top:512px;width:62px;height:16px;background:#e1e1e1;border:1px solid #adadad"></div>
<div class="t" style="left:425.80px;top:516.09px;font-size:9.43px;font-family:'Liberation Sans',sans-serif;font-weight:normal;color:#111;transform:scaleX(0.8648);transform-origin:0 0;">Hex</div>
<svg class="a" style="left:474px;top:518px" width="7" height="5"><path d="M0.5 0.5h5.5l-2.75 3.3z" fill="#111"/></svg>
<div class="a" style="left:485px;top:511px;width:18px;height:17px;background:#cce4f7;border:1px solid #99c9ef"></div>
<svg class="a" style="left:488px;top:514px" width="12" height="12" viewBox="0 0 12 12"><path d="M0.5 0.5h11v11H2L0.5 10z" fill="#2e2e2e"/><rect x="2.2" y="1.2" width="7.6" height="4" fill="#dfe8f2"/><rect x="3" y="7.5" width="6" height="4" fill="#bbb"/><rect x="3.8" y="8.2" width="1.6" height="2.8" fill="#333"/></svg>
<svg class="a" style="left:504px;top:514px" width="15" height="11" viewBox="0 0 15 11"><g fill="#2a2a2a"><circle cx="4" cy="7.2" r="3.2"/><circle cx="10.6" cy="7.2" r="3.2"/><rect x="5.5" y="3" width="3.6" height="3.5"/><rect x="2.4" y="2" width="2.8" height="3.5"/><rect x="9.4" y="2" width="2.8" height="3.5"/></g><circle cx="4" cy="7.6" r="1.3" fill="#8a6a4a"/><circle cx="10.6" cy="7.6" r="1.3" fill="#8a6a4a"/></svg>
<div class="a" style="left:377px;top:534px;width:613px;height:107px;background:#fff;border:1px solid #a9a9a9"></div>
<div class="t" style="left:380.30px;top:539.98px;font-size:11.60px;font-family:'Liberation Mono',monospace;font-weight:normal;color:#484848;transform:scaleX(1.1041);transform-origin:0 0;">00 7A AD 01 00 7B AD 01 00 7C AD 01 00 7D AD 01 00 7E AD 01 00 7F AD 01 00 80</div>
<div class="t" style="left:380.30px;top:553.83px;font-size:11.60px;font-family:'Liberation Mono',monospace;font-weight:normal;color:#484848;transform:scaleX(1.1041);transform-origin:0 0;">AD 01 00 81 AD 01 00 82 AD 01 00 83 AD 01 00 84 AD 01 00 85 AD 01 00 86 AD 01</div>
<div class="t" style="left:380.30px;top:567.68px;font-size:11.60px;font-family:'Liberation Mono',monospace;font-weight:normal;color:#484848;transform:scaleX(1.1041);transform-origin:0 0;">00 87 AD 01 00 88 AD 01 00 89 AD 01 00 8A AD 01 00 8B AD 01 00 8C AD 01 00 8D</div>
<div class="t" style="left:380.30px;top:581.53px;font-size:11.60px;font-family:'Liberation Mono',monospace;font-weight:normal;color:#484848;transform:scaleX(1.1041);transform-origin:0 0;">AD 01 00 8E AD 01 00 8F AD 01 00 90 AD 01 00 91 AD 01 00 92 AD 01 00 93 AD 01</div>
<div class="t" style="left:380.30px;top:595.38px;font-size:11.60px;font-family:'Liberation Mono',monospace;font-weight:normal;color:#484848;transform:scaleX(1.1041);transform-origin:0 0;">00 94 AD 01 00 95 AD 01 00 96 AD 01 00 97 AD 01 00 98 AD 01 00 99 AD 01 00 9A</div>
<div class="t" style="left:380.30px;top:609.23px;font-size:11.60px;font-family:'Liberation Mono',monospace;font-weight:normal;color:#484848;transform:scaleX(1.1041);transform-origin:0 0;">AD 01 00 9B AD 01 00 9C AD 01 00 9D AD 01 00 9E AD 01 00 9F AD 01 00 A0 AD 01</div>
<div class="t" style="left:380.30px;top:623.08px;font-size:11.60px;font-family:'Liberation Mono',monospace;font-weight:normal;color:#484848;transform:scaleX(1.1041);transform-origin:0 0;">00 A1 AD 01 00 A2 AD 01 00 A3 AD 01 00 A4 AD 01 00 A5 AD 01 00 A6 AD 01 00 A7</div>
<svg class="a" style="left:996px;top:537px" width="11" height="8"><path d="M1.5 6L5.5 2l4 4" fill="none" stroke="#555" stroke-width="1.1"/></svg>
<div class="a" style="left:996px;top:547px;width:11px;height:31px;background:#cdcdcd;"></div>
<svg class="a" style="left:996px;top:632px" width="11" height="8"><path d="M1.5 2l4 4 4-4" fill="none" stroke="#555" stroke-width="1.1"/></svg>
<div class="a" style="left:497px;top:533px;width:65px;height:15px;background:#fff;border:1px solid #767676"></div>
<div class="t" style="left:500.80px;top:535.71px;font-size:10.57px;font-family:'Liberation Sans',sans-serif;font-weight:normal;color:#555;transform:scaleX(0.8585);transform-origin:0 0;">Save all to file</div>
<svg class="a" style="left:0;top:0" width="1024" height="699" viewBox="0 0 1024 699">
<clipPath id="wc"><rect x="512" y="90" width="510.5" height="324"/></clipPath><g clip-path="url(#wc)"><path d="M560.50 131.15L563.50 97.5H585.50L588.50 131.15L585.50 164.8H563.50Z M597.95 131.15L600.95 97.5H622.95L625.95 131.15L622.95 164.8H600.95Z M635.40 131.15L638.40 97.5H660.40L663.40 131.15L660.40 164.8H638.40Z M672.85 131.15L675.85 97.5H697.85L700.85 131.15L697.85 164.8H675.85Z M747.75 131.15L750.75 97.5H772.75L775.75 131.15L772.75 164.8H750.75Z M785.20 131.15L788.20 97.5H810.20L813.20 131.15L810.20 164.8H788.20Z M822.65 131.15L825.65 97.5H847.65L850.65 131.15L847.65 164.8H825.65Z M860.10 131.15L863.10 97.5H885.10L888.10 131.15L885.10 164.8H863.10Z M935.00 131.15L938.00 97.5H960.00L963.00 131.15L960.00 164.8H938.00Z M972.45 131.15L975.45 97.5H997.45L1000.45 131.15L997.45 164.8H975.45Z M588.50 131.15V164.8H597.95V131.15 M625.95 131.15V97.5H635.40V131.15 M663.40 131.15V164.8H672.85V131.15 M700.85 131.15V164.8H747.75V131.15 M775.75 131.15V164.8H785.20V131.15 M813.20 131.15V97.5H822.65V131.15 M850.65 131.15V164.8H860.10V131.15 M888.10 131.15V164.8H935.00V131.15 M963.00 131.15V164.8H972.45V131.15 M509 94.5L514.5 131.15L509 167.8 M514.5 131.15V164.8H537.2V97.5H541.2V164.8H560.50V131.15 M1000.45 131.15V97.5H1014.3V164.8H1030" fill="none" stroke="#f7787c" stroke-width="1.1"/>
<path d="M700.85 131.15V164.8H724.30V97.5H727.90V164.8H747.75V131.15" fill="none" stroke="#f7787c" stroke-width="1.1"/>
<path d="M888.10 131.15V164.8H911.90V97.5H915.50V164.8H935.00V131.15" fill="none" stroke="#f7787c" stroke-width="1.1"/>
<text x="574.50" y="136.45" text-anchor="middle" font-family="Liberation Sans" font-size="12.6" fill="#f0444e" textLength="14.09" lengthAdjust="spacingAndGlyphs">7A</text><text x="611.95" y="136.45" text-anchor="middle" font-family="Liberation Sans" font-size="12.6" fill="#f0444e" textLength="16.00" lengthAdjust="spacingAndGlyphs">AD</text><text x="649.40" y="136.45" text-anchor="middle" font-family="Liberation Sans" font-size="12.6" fill="#f0444e" textLength="12.81" lengthAdjust="spacingAndGlyphs">01</text><text x="686.85" y="136.45" text-anchor="middle" font-family="Liberation Sans" font-size="12.6" fill="#f0444e" textLength="12.81" lengthAdjust="spacingAndGlyphs">00</text><text x="761.75" y="136.45" text-anchor="middle" font-family="Liberation Sans" font-size="12.6" fill="#f0444e" textLength="14.09" lengthAdjust="spacingAndGlyphs">7B</text><text x="799.20" y="136.45" text-anchor="middle" font-family="Liberation Sans" font-size="12.6" fill="#f0444e" textLength="16.00" lengthAdjust="spacingAndGlyphs">AD</text><text x="836.65" y="136.45" text-anchor="middle" font-family="Liberation Sans" font-size="12.6" fill="#f0444e" textLength="12.81" lengthAdjust="spacingAndGlyphs">01</text><text x="874.10" y="136.45" text-anchor="middle" font-family="Liberation Sans" font-size="12.6" fill="#f0444e" textLength="12.81" lengthAdjust="spacingAndGlyphs">00</text><text x="949.00" y="136.45" text-anchor="middle" font-family="Liberation Sans" font-size="12.6" fill="#f0444e" textLength="14.72" lengthAdjust="spacingAndGlyphs">7C</text><text x="986.45" y="136.45" text-anchor="middle" font-family="Liberation Sans" font-size="12.6" fill="#f0444e" textLength="16.00" lengthAdjust="spacingAndGlyphs">AD</text><path d="M560.50 212.05L563.50 178.3H585.50L588.50 212.05L585.50 245.8H563.50Z M597.95 212.05L600.95 178.3H622.95L625.95 212.05L622.95 245.8H600.95Z M635.40 212.05L638.40 178.3H660.40L663.40 212.05L660.40 245.8H638.40Z M672.85 212.05L675.85 178.3H697.85L700.85 212.05L697.85 245.8H675.85Z M747.75 212.05L750.75 178.3H772.75L775.75 212.05L772.75 245.8H750.75Z M785.20 212.05L788.20 178.3H810.20L813.20 212.05L810.20 245.8H788.20Z M822.65 212.05L825.65 178.3H847.65L850.65 212.05L847.65 245.8H825.65Z M860.10 212.05L863.10 178.3H885.10L888.10 212.05L885.10 245.8H863.10Z M935.00 212.05L938.00 178.3H960.00L963.00 212.05L960.00 245.8H938.00Z M972.45 212.05L975.45 178.3H997.45L1000.45 212.05L997.45 245.8H975.45Z M588.50 212.05V245.8H597.95V212.05 M625.95 212.05V178.3H635.40V212.05 M663.40 212.05V245.8H672.85V212.05 M700.85 212.05V245.8H747.75V212.05 M775.75 212.05V245.8H785.20V212.05 M813.20 212.05V178.3H822.65V212.05 M850.65 212.05V245.8H860.10V212.05 M888.10 212.05V245.8H935.00V212.05 M963.00 212.05V245.8H972.45V212.05 M509 175.3L514.5 212.05L509 248.8 M514.5 212.05V245.8H560.50V212.05 M1000.45 212.05V178.3H1014.3V245.8H1030" fill="none" stroke="#62a882" stroke-width="1.1"/>
<text x="574.50" y="217.35" text-anchor="middle" font-family="Liberation Sans" font-size="12.6" fill="#368c5e" textLength="14.09" lengthAdjust="spacingAndGlyphs">7B</text><text x="611.95" y="217.35" text-anchor="middle" font-family="Liberation Sans" font-size="12.6" fill="#368c5e" textLength="16.00" lengthAdjust="spacingAndGlyphs">AD</text><text x="649.40" y="217.35" text-anchor="middle" font-family="Liberation Sans" font-size="12.6" fill="#368c5e" textLength="12.81" lengthAdjust="spacingAndGlyphs">01</text><text x="686.85" y="217.35" text-anchor="middle" font-family="Liberation Sans" font-size="12.6" fill="#368c5e" textLength="12.81" lengthAdjust="spacingAndGlyphs">00</text><text x="761.75" y="217.35" text-anchor="middle" font-family="Liberation Sans" font-size="12.6" fill="#368c5e" textLength="14.72" lengthAdjust="spacingAndGlyphs">7C</text><text x="799.20" y="217.35" text-anchor="middle" font-family="Liberation Sans" font-size="12.6" fill="#368c5e" textLength="16.00" lengthAdjust="spacingAndGlyphs">AD</text><text x="836.65" y="217.35" text-anchor="middle" font-family="Liberation Sans" font-size="12.6" fill="#368c5e" textLength="12.81" lengthAdjust="spacingAndGlyphs">01</text><text x="874.10" y="217.35" text-anchor="middle" font-family="Liberation Sans" font-size="12.6" fill="#368c5e" textLength="12.81" lengthAdjust="spacingAndGlyphs">00</text><text x="949.00" y="217.35" text-anchor="middle" font-family="Liberation Sans" font-size="12.6" fill="#368c5e" textLength="14.72" lengthAdjust="spacingAndGlyphs">7D</text><text x="986.45" y="217.35" text-anchor="middle" font-family="Liberation Sans" font-size="12.6" fill="#368c5e" textLength="16.00" lengthAdjust="spacingAndGlyphs">AD</text><path d="M512 327H537.10V259.6H540.90V327H724.30V259.6H728.10V327H911.90V259.6H915.70V327H1030" fill="none" stroke="#6b9ff2" stroke-width="1.2"/>
<path d="M512 408H1030" stroke="#ffb77a" stroke-width="1.2"/>
<rect x="505.00" y="341" width="9.90" height="67.5" fill="#ff8414"/><rect x="560.50" y="341" width="28.00" height="67.5" fill="#ff8414"/><rect x="597.95" y="341" width="28.00" height="67.5" fill="#ff8414"/><rect x="635.40" y="341" width="28.00" height="67.5" fill="#ff8414"/><rect x="672.85" y="341" width="28.00" height="67.5" fill="#ff8414"/><rect x="747.75" y="341" width="28.00" height="67.5" fill="#ff8414"/><rect x="785.20" y="341" width="28.00" height="67.5" fill="#ff8414"/><rect x="822.65" y="341" width="28.00" height="67.5" fill="#ff8414"/><rect x="860.10" y="341" width="28.00" height="67.5" fill="#ff8414"/><rect x="935.00" y="341" width="28.00" height="67.5" fill="#ff8414"/><rect x="972.45" y="341" width="28.00" height="67.5" fill="#ff8414"/><rect x="1009.90" y="341" width="28.00" height="67.5" fill="#ff8414"/></g>
<path d="M1005.3 280.5L1018.3 292.3L1005.3 304.1Z" fill="#f4f4f4" stroke="#a8a8a8" stroke-width="1"/>
<path d="M250 371.5H293.5V130.5H353 M250 353.5H287.5V211.5H353 M250 335.5H281.5V373.5H353" fill="none" stroke="#3a3a3a" stroke-width="1"/>
</svg>
<div class="a" style="left:352.3px;top:126.60000000000001px;width:8.6px;height:8.6px;background:#fff;border:1px solid #444;border-radius:1px"></div>
<div class="a" style="left:352.3px;top:207.7px;width:8.6px;height:8.6px;background:#fff;border:1px solid #444;border-radius:1px"></div>
<div class="a" style="left:352.3px;top:288.7px;width:8.6px;height:8.6px;background:#fff;border:1px solid #444;border-radius:1px"></div>
<div class="a" style="left:352.3px;top:370.0px;width:8.6px;height:8.6px;background:#fff;border:1px solid #444;border-radius:1px"></div>
<svg class="a" style="left:0;top:0" width="1024" height="699" viewBox="0 0 1024 699">
<path d="M518.5 86v4 M527.5 86v4 M537.5 86v4 M547.5 86v4 M557.5 86v4 M566.5 86v4 M576.5 68v22 M586.5 86v4 M595.5 86v4 M605.5 86v4 M615.5 86v4 M625.5 86v4 M634.5 86v4 M644.5 86v4 M654.5 86v4 M664.5 86v4 M673.5 68v22 M683.5 86v4 M693.5 86v4 M703.5 86v4 M712.5 86v4 M722.5 86v4 M732.5 86v4 M741.5 86v4 M751.5 86v4 M761.5 86v4 M771.5 68v22 M780.5 86v4 M790.5 86v4 M800.5 86v4 M810.5 86v4 M819.5 86v4 M829.5 86v4 M839.5 86v4 M849.5 86v4 M858.5 86v4 M868.5 68v22 M878.5 86v4 M888.5 86v4 M897.5 86v4 M907.5 86v4 M917.5 86v4 M926.5 86v4 M936.5 86v4 M946.5 86v4 M956.5 86v4 M965.5 68v22 M975.5 86v4 M985.5 86v4 M995.5 86v4 M1004.5 86v4 M1014.5 86v4" stroke="#555" stroke-width="1"/>
</svg>
<div class="t" style="left:578.00px;top:73.42px;font-size:9.86px;font-family:'Liberation Sans',sans-serif;font-weight:normal;color:#222;transform:scaleX(0.9734);transform-origin:0 0;">100 μs</div>
<div class="t" style="left:675.35px;top:73.42px;font-size:9.86px;font-family:'Liberation Sans',sans-serif;font-weight:normal;color:#222;transform:scaleX(0.9734);transform-origin:0 0;">200 μs</div>
<div class="t" style="left:772.70px;top:73.42px;font-size:9.86px;font-family:'Liberation Sans',sans-serif;font-weight:normal;color:#222;transform:scaleX(0.9734);transform-origin:0 0;">300 μs</div>
<div class="t" style="left:870.05px;top:73.42px;font-size:9.86px;font-family:'Liberation Sans',sans-serif;font-weight:normal;color:#222;transform:scaleX(0.9734);transform-origin:0 0;">400 μs</div>
<div class="t" style="left:967.40px;top:73.42px;font-size:9.86px;font-family:'Liberation Sans',sans-serif;font-weight:normal;color:#222;transform:scaleX(0.9734);transform-origin:0 0;">500 μs</div>
<div class="a" style="left:0;top:0;width:1024px;height:699px;border:1px solid #1c7fd4;border-bottom-width:2px"></div>
</body></html>
